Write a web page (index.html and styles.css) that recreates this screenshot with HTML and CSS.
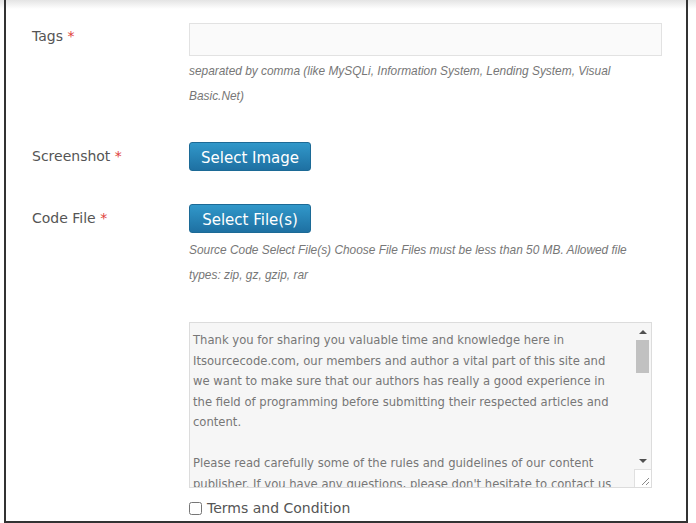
FILE: index.html
```html
<!DOCTYPE html>
<html lang="en">
<head>
<meta charset="utf-8">
<title>Submit Source Code</title>
<link rel="stylesheet" href="styles.css">
</head>
<body>
<div class="frame">
  <div class="row row-tags">
    <div class="label label-tags">Tags <span class="req">*</span></div>
    <div class="field">
      <input class="text-input" type="text">
      <p class="help">separated by comma (like MySQLi, Information System, Lending System, Visual Basic.Net)</p>
    </div>
  </div>

  <div class="row row-shot">
    <div class="label">Screenshot <span class="req">*</span></div>
    <div class="field">
      <button class="btn" type="button">Select Image</button>
    </div>
  </div>

  <div class="row row-code">
    <div class="label">Code File <span class="req">*</span></div>
    <div class="field">
      <button class="btn" type="button">Select File(s)</button>
      <p class="help help-code">Source Code Select File(s) Choose File Files must be less than 50 MB. Allowed file types: zip, gz, gzip, rar</p>
    </div>
  </div>

  <div class="row row-terms">
    <div class="label"></div>
    <div class="field">
      <div class="textarea">
        <div class="ta-text">
          <p>Thank you for sharing you valuable time and knowledge here in Itsourcecode.com, our members and author a vital part of this site and we want to make sure that our authors has really a good experience in the field of programming before submitting their respected articles and content.</p>
          <p>Please read carefully some of the rules and guidelines of our content publisher. If you have any questions, please don't hesitate to contact us through our contact page.</p>
        </div>
        <div class="ta-scroll">
          <div class="sb-btn"><span class="arrow-up"></span></div>
          <div class="sb-track"><div class="sb-thumb"></div></div>
          <div class="sb-btn"><span class="arrow-down"></span></div>
          <div class="sb-resize">
            <svg width="16" height="16" viewBox="0 0 16 16"><path d="M14 7 L7 14 M14 11 L11 14" stroke="#8a8a8a" stroke-width="1" fill="none"/></svg>
          </div>
        </div>
      </div>
      <label class="check-row"><input class="check" type="checkbox"><span class="check-text">Terms and Condition</span></label>
    </div>
  </div>
</div>
</body>
</html>
```

FILE: styles.css
```css
* { box-sizing: border-box; }

html, body {
  margin: 0;
  padding: 0;
}

body {
  width: 696px;
  height: 523px;
  overflow: hidden;
  background: linear-gradient(to bottom, #e4e4e4 0, #ffffff 9px);
  font-family: "DejaVu Sans", Verdana, sans-serif;
}

.frame {
  margin-left: 4px;
  width: 684px;
  height: 523px;
  border-left: 2px solid #333;
  border-right: 2px solid #333;
  border-bottom: 2px solid #333;
  padding: 23px 0 0 26px;
  overflow: hidden;
}

.row {
  display: flex;
}

.row-tags { margin-bottom: 33px; }
.row-shot { margin-bottom: 33px; }
.row-code { margin-bottom: 34.5px; }

.label {
  width: 157px;
  flex: none;
  padding-top: 4px;
  font-size: 14px;
  line-height: 20px;
  color: #555;
}

.label-tags {
  padding-top: 2.5px;
}

.req {
  color: #e0403a;
}

.field {
  width: 473px;
  flex: none;
}

.text-input {
  display: block;
  width: 473px;
  height: 33px;
  margin: 0;
  border: 1px solid #e2e2e2;
  background: #fafafa;
  outline: none;
}

.help {
  width: 466px;
  margin: 3px 0 0;
  font-family: "Liberation Sans", Arial, sans-serif;
  font-style: italic;
  font-size: 11.9px;
  line-height: 25px;
  color: #777;
}

.help-code {
  margin-top: 4.5px;
}

.btn {
  display: block;
  width: 122px;
  height: 29px;
  margin: 0;
  padding: 3px 0 0;
  border: 1px solid #1c6a96;
  border-radius: 3px;
  background: linear-gradient(to bottom, #3198ca, #1e70a2);
  color: #fff;
  font-family: "DejaVu Sans", Verdana, sans-serif;
  font-size: 15px;
  line-height: 24px;
  text-align: center;
}

.textarea {
  display: flex;
  width: 463px;
  height: 166px;
  border: 1px solid #dcdcdc;
  background: #f6f6f6;
}

.ta-text {
  flex: 1;
  overflow: hidden;
  padding: 7px 14px 0 3px;
  font-size: 11.6px;
  line-height: 20.5px;
  color: #777;
}

.ta-text p {
  margin: 0 0 20.5px;
}

.ta-scroll {
  width: 17px;
  flex: none;
  display: flex;
  flex-direction: column;
}

.sb-btn {
  height: 17px;
  display: flex;
  align-items: center;
  justify-content: center;
}

.arrow-up {
  width: 0;
  height: 0;
  border-left: 4px solid transparent;
  border-right: 4px solid transparent;
  border-bottom: 4px solid #505050;
}

.arrow-down {
  width: 0;
  height: 0;
  border-left: 4px solid transparent;
  border-right: 4px solid transparent;
  border-top: 4px solid #505050;
}

.sb-track {
  flex: 1;
  padding: 0 2px;
}

.sb-thumb {
  height: 33px;
  background: #c1c1c1;
}

.sb-resize {
  height: 18px;
  border-top: 1px solid #e0e0e0;
  border-left: 1px solid #e0e0e0;
  background: #fff;
  display: flex;
  align-items: flex-end;
  justify-content: flex-end;
}

.sb-resize svg {
  display: block;
}

.check-row {
  display: flex;
  align-items: center;
  gap: 5px;
  margin-top: 10px;
  font-size: 14px;
  line-height: 20px;
  color: #555;
}

.check {
  flex: none;
  width: 13px;
  height: 13px;
  margin: 0;
}
```
